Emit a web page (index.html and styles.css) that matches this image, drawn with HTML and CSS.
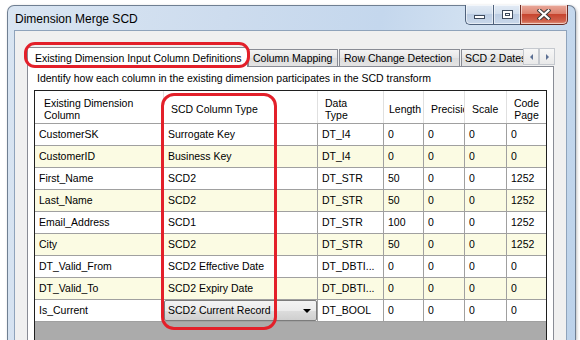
FILE: index.html
```html
<!DOCTYPE html>
<html>
<head>
<meta charset="utf-8">
<link rel="stylesheet" href="styles.css">
</head>
<body>
<div class="window">
  <div class="titlebar">
    <span class="title">Dimension Merge SCD</span>
    <div class="caption">
      <div class="cbtn min"><span class="min-glyph"></span></div>
      <div class="cbtn max"><span class="max-glyph"></span></div>
      <div class="cbtn close">
        <svg width="14" height="11" viewBox="0 0 14 11">
          <path d="M2.5 1.5 L11.5 9.5 M11.5 1.5 L2.5 9.5" stroke="#3b3b3b" stroke-width="4.2" stroke-linecap="square"/>
          <path d="M2.5 1.5 L11.5 9.5 M11.5 1.5 L2.5 9.5" stroke="#ffffff" stroke-width="2.2" stroke-linecap="square"/>
        </svg>
      </div>
    </div>
  </div>
  <div class="client">
    <div class="tabstrip">
      <div class="tab sel">Existing Dimension Input Column Definitions</div>
      <div class="tab t-cm">Column Mapping</div>
      <div class="tab t-rcd">Row Change Detection</div>
      <div class="tab t-scd">SCD 2 Dates</div>
      <div class="scroll">
        <div class="sbtn"><span class="tri-l"></span></div>
        <div class="sbtn"><span class="tri-r"></span></div>
      </div>
    </div>
    <div class="page">
      <div class="desc">Identify how each column in the existing dimension participates in the SCD transform</div>
      <div class="grid">
        <div class="row hdr">
          <div class="c c1">Existing Dimension<br>Column</div>
          <div class="c">SCD Column Type</div>
          <div class="c">Data<br>Type</div>
          <div class="c cl">Length</div>
          <div class="c">Precision</div>
          <div class="c">Scale</div>
          <div class="c cp">Code<br>Page</div>
        </div>
        <div class="row"><div class="c">CustomerSK</div><div class="c">Surrogate Key</div><div class="c">DT_I4</div><div class="c">0</div><div class="c">0</div><div class="c">0</div><div class="c">0</div></div>
        <div class="row alt"><div class="c">CustomerID</div><div class="c">Business Key</div><div class="c">DT_I4</div><div class="c">0</div><div class="c">0</div><div class="c">0</div><div class="c">0</div></div>
        <div class="row"><div class="c">First_Name</div><div class="c">SCD2</div><div class="c">DT_STR</div><div class="c">50</div><div class="c">0</div><div class="c">0</div><div class="c">1252</div></div>
        <div class="row alt"><div class="c">Last_Name</div><div class="c">SCD2</div><div class="c">DT_STR</div><div class="c">50</div><div class="c">0</div><div class="c">0</div><div class="c">1252</div></div>
        <div class="row"><div class="c">Email_Address</div><div class="c">SCD1</div><div class="c">DT_STR</div><div class="c">100</div><div class="c">0</div><div class="c">0</div><div class="c">1252</div></div>
        <div class="row alt"><div class="c">City</div><div class="c">SCD2</div><div class="c">DT_STR</div><div class="c">50</div><div class="c">0</div><div class="c">0</div><div class="c">1252</div></div>
        <div class="row"><div class="c">DT_Valid_From</div><div class="c">SCD2 Effective Date</div><div class="c">DT_DBTI...</div><div class="c">0</div><div class="c">0</div><div class="c">0</div><div class="c">0</div></div>
        <div class="row alt"><div class="c">DT_Valid_To</div><div class="c">SCD2 Expiry Date</div><div class="c">DT_DBTI...</div><div class="c">0</div><div class="c">0</div><div class="c">0</div><div class="c">0</div></div>
        <div class="row"><div class="c">Is_Current</div><div class="c cc"><div class="combo"><span>SCD2 Current Record</span><span class="arrow"></span></div></div><div class="c">DT_BOOL</div><div class="c">0</div><div class="c">0</div><div class="c">0</div><div class="c">0</div></div>
      </div>
    </div>
  </div>
</div>
<div class="mark mark-tab"></div>
<div class="mark mark-col"></div>
</body>
</html>
```

FILE: styles.css
```css
* { box-sizing: border-box; }
html, body { margin: 0; padding: 0; }
body {
  width: 580px;
  height: 340px;
  overflow: hidden;
  background: #ffffff;
  font-family: "Liberation Sans", Arial, sans-serif;
  font-size: 10.5px;
  color: #000;
  position: relative;
}
.window {
  margin: 5px 0 0 7px;
  width: 569px;
  height: 335px;
  border: 1px solid #6f7f92;
  border-bottom: none;
  border-radius: 7px 7px 0 0;
  background: linear-gradient(100deg, #d9e5f2 0%, #cddcee 35%, #c4d7ed 60%, #d2e1f1 75%, #bcd2ea 100%);
  box-shadow: 1px 1px 3px rgba(0,0,0,0.25);
}
.titlebar {
  height: 24px;
  display: flex;
  align-items: center;
}
.title {
  padding-left: 7px;
  font-size: 12px;
  color: #000;
  padding-top: 1px;
}
.caption {
  margin-left: auto;
  margin-right: 7px;
  align-self: flex-start;
  margin-top: -1px;
  display: flex;
  height: 20px;
}
.cbtn {
  height: 20px;
  border: 1px solid #4f627c;
  border-top: none;
  display: flex;
  align-items: center;
  justify-content: center;
  box-shadow: inset 0 0 0 1px rgba(255,255,255,0.55);
}
.min {
  width: 28px;
  border-right: none;
  border-radius: 0 0 0 5px;
  background: linear-gradient(#e3ebf5 0%, #d2dfee 45%, #bccde3 50%, #c9d8ea 100%);
}
.max {
  width: 27px;
  border-right: none;
  background: linear-gradient(#e3ebf5 0%, #d2dfee 45%, #bccde3 50%, #c9d8ea 100%);
}
.close {
  width: 48px;
  border-radius: 0 0 5px 0;
  border-color: #6b2a22;
  background: linear-gradient(#e9aa9c 0%, #dd826f 45%, #c7452f 50%, #d0624d 85%, #e39a84 100%);
}
.min-glyph {
  width: 11px;
  height: 4px;
  margin-top: 5px;
  background: #fff;
  border: 1px solid #3d4a5c;
}
.max-glyph {
  width: 11px;
  height: 9px;
  border: 1px solid #3d4a5c;
  background: #fff;
  box-shadow: inset 0 0 0 2px #fff, inset 0 0 0 3px #3d4a5c;
}
.client {
  margin-left: 6px;
  width: 553px;
  height: 310px;
  background: #f0f0f0;
  border: 1px solid #8fa3bb;
  border-bottom: none;
  padding: 16px 12px 0 12px;
}
.tabstrip {
  display: flex;
  align-items: flex-end;
  height: 19px;
  position: relative;
  z-index: 2;
}
.tab {
  height: 17px;
  border: 1px solid #898c95;
  border-bottom: none;
  background: linear-gradient(#f4f4f4, #e6e6e6 50%, #dcdcdc 50%, #e4e4e4);
  padding: 2px 0 0 4px;
  line-height: 13px;
  white-space: nowrap;
  overflow: hidden;
  flex: none;
}
.tab.sel {
  width: 221px;
  height: 20px;
  margin-bottom: -1px;
  background: #ffffff;
  padding: 4px 0 0 7px;
  position: relative;
  z-index: 3;
}
.t-cm { width: 90px; }
.t-rcd { width: 121px; margin-left: 1px; }
.t-scd { width: 62px; margin-left: 1px; border-right: none; padding-left: 3px; }
.scroll {
  display: flex;
  align-self: flex-start;
  margin-top: 1px;
}
.sbtn {
  width: 16px;
  height: 17px;
  border: 1px solid #c5c9cf;
  background: linear-gradient(#f7f7f7, #e9e9e9);
  display: flex;
  align-items: center;
  justify-content: center;
}
.tri-l, .tri-r {
  width: 0; height: 0;
  border-top: 3px solid transparent;
  border-bottom: 3px solid transparent;
}
.tri-l { border-right: 3px solid #5b6f93; }
.tri-r { border-left: 3px solid #5b6f93; }
.page {
  width: 527px;
  height: 275px;
  border: 1px solid #898c95;
  border-bottom: none;
  background: #ffffff;
}
.desc {
  height: 23px;
  line-height: 22px;
  padding-left: 9px;
  white-space: nowrap;
}
.grid {
  margin-left: 6px;
  width: 513px;
  height: 250px;
  border: 1px solid #1f1f1f;
  border-bottom: none;
  background: #ababab;
  overflow: hidden;
}
.row {
  display: grid;
  grid-template-columns: 129px 154px 66px 40px 41px 42px 39px;
  height: 22px;
  border-bottom: 1px solid #a0a0a0;
  background: #ffffff;
}
.row.alt { background: #fbfbe3; }
.c {
  border-right: 1px solid #a0a0a0;
  padding-left: 4px;
  line-height: 21px;
  white-space: nowrap;
  overflow: hidden;
}
.c:last-child { border-right: none; }
.hdr {
  height: 33px;
  background: #ffffff;
  border-bottom: 1px solid #a0a0a0;
}
.hdr .c {
  border-right-color: #e0e0e0;
  line-height: 12px;
  padding: 4px 0 0 7px;
  display: flex;
  align-items: center;
}
.hdr .c1 { padding-left: 9px; }
.hdr .cl { padding-left: 5px; }
.hdr .cp { justify-content: center; text-align: center; padding-left: 0; }
.cc { padding: 0; }
.combo {
  height: 21px;
  border: 1px solid #7c7c7c;
  border-radius: 2px;
  background: linear-gradient(#f3f3f3 0%, #ebebeb 50%, #dddddd 50%, #cfcfcf 100%);
  display: flex;
  align-items: center;
  justify-content: space-between;
  padding-left: 3px;
  line-height: 19px;
}
.arrow {
  width: 0; height: 0;
  border-left: 4px solid transparent;
  border-right: 4px solid transparent;
  border-top: 4px solid #000;
  margin-right: 5px;
}
.mark {
  position: absolute;
  border: 3px solid #e3202a;
  pointer-events: none;
  z-index: 10;
}
.mark-tab {
  left: 24px;
  top: 42px;
  width: 226px;
  height: 26px;
  border-radius: 11px;
}
.mark-col {
  left: 161px;
  top: 93px;
  width: 116px;
  height: 237px;
  border-radius: 13px;
}
```
